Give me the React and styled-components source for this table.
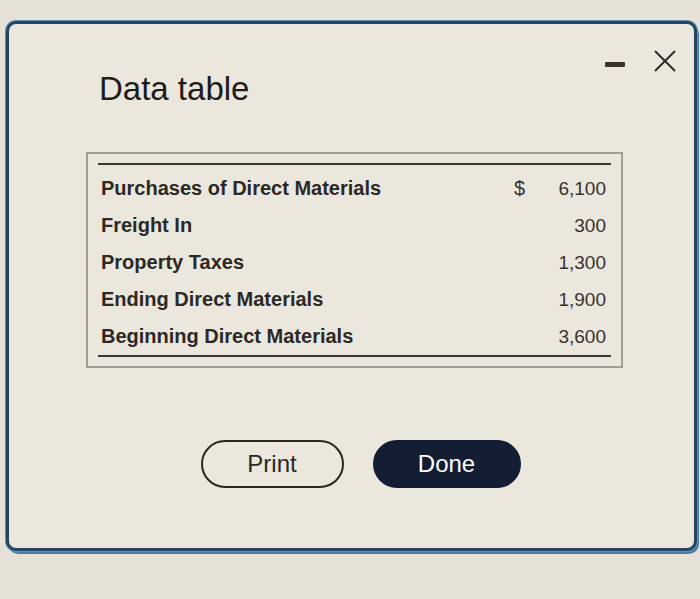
import React from 'react'
import styled, { createGlobalStyle } from 'styled-components'

const rows = [
  { label: 'Purchases of Direct Materials', amount: '6,100', dollar: true },
  { label: 'Freight In', amount: '300' },
  { label: 'Property Taxes', amount: '1,300' },
  { label: 'Ending Direct Materials', amount: '1,900' },
  { label: 'Beginning Direct Materials', amount: '3,600' },
]

const App = () => {
  return (
    <>
      <GlobalStyle />
      <Page>
        <Dialog>
          <Header>
            <Title>Data table</Title>
            <Controls>
              <MinimizeBar />
              <CloseIcon viewBox="0 0 22 22">
                <path d="M1 1 L21 21 M21 1 L1 21" />
              </CloseIcon>
            </Controls>
          </Header>
          <TableBox>
            <Rule />
            {rows.map(r => (
              <Row key={r.label}>
                <Label>{r.label}</Label>
                <Dollar>{r.dollar ? '$' : ''}</Dollar>
                <Amount>{r.amount}</Amount>
              </Row>
            ))}
            <Rule />
          </TableBox>
          <Buttons>
            <Button>Print</Button>
            <Button primary>Done</Button>
          </Buttons>
        </Dialog>
      </Page>
    </>
  )
}

export default App

const GlobalStyle = createGlobalStyle`
  html, body {
    margin: 0;
    background: #e7e2d7;
    font-family: "Liberation Sans", Arial, sans-serif;
  }
`

const Page = styled.div`
  width: 700px;
  height: 599px;
  padding: 21px 0 0 6px;
  box-sizing: border-box;
  overflow: hidden;
`

const Dialog = styled.div`
  width: 691px;
  height: 530px;
  box-sizing: border-box;
  border: 3px solid #24455f;
  border-radius: 10px;
  box-shadow: 0 0 0 1px #5f8fb5, 2px 3px 0 0 #4a7ea8;
  background: #ece7dd;
  display: flex;
  flex-direction: column;
`

const Header = styled.div`
  display: flex;
  justify-content: space-between;
  align-items: flex-start;
  padding: 0 18px 0 90px;
`

const Title = styled.h1`
  margin: 47px 0 0;
  font-size: 33px;
  line-height: 36px;
  font-weight: 400;
  color: #1e1c1a;
`

const Controls = styled.div`
  margin-top: 26px;
  display: flex;
  align-items: center;
  gap: 29px;
  height: 22px;
`

const MinimizeBar = styled.div`
  width: 20px;
  height: 5px;
  margin-top: 6px;
  background: #3a342c;
  border-radius: 1px;
`

const CloseIcon = styled.svg`
  width: 22px;
  height: 22px;
  stroke: #2e2a26;
  stroke-width: 2;
  fill: none;
`

const TableBox = styled.div`
  margin: 45px 0 0 77px;
  width: 537px;
  height: 216px;
  box-sizing: border-box;
  border: 2px solid #a39e95;
  padding: 9px 10px 0;
  display: flex;
  flex-direction: column;
`

const Rule = styled.div`
  height: 2px;
  background: #3b3732;
  margin-bottom: 5px;
  &:last-child {
    margin-bottom: 0;
  }
`

const Row = styled.div`
  display: grid;
  grid-template-columns: 1fr 22px 70px;
  align-items: center;
  height: 37px;
  padding: 0 5px 0 3px;
`

const Label = styled.div`
  font-size: 20px;
  font-weight: 700;
  color: #2b2926;
`

const Dollar = styled.div`
  font-size: 20px;
  color: #35322e;
`

const Amount = styled.div`
  font-size: 19px;
  color: #35322e;
  text-align: right;
`

const Buttons = styled.div`
  margin-top: 72px;
  display: flex;
  justify-content: center;
  gap: 29px;
  padding-left: 18px;
`

const Button = styled.button`
  width: ${p => (p.primary ? '148px' : '143px')};
  height: 48px;
  box-sizing: border-box;
  border-radius: 24px;
  border: 2px solid ${p => (p.primary ? '#131d33' : '#2b2520')};
  background: ${p => (p.primary ? '#131d33' : 'transparent')};
  color: ${p => (p.primary ? '#ffffff' : '#2b2926')};
  font-family: "Liberation Sans", Arial, sans-serif;
  font-size: 24px;
  font-weight: ${p => (p.primary ? 500 : 400)};
  cursor: pointer;
`
